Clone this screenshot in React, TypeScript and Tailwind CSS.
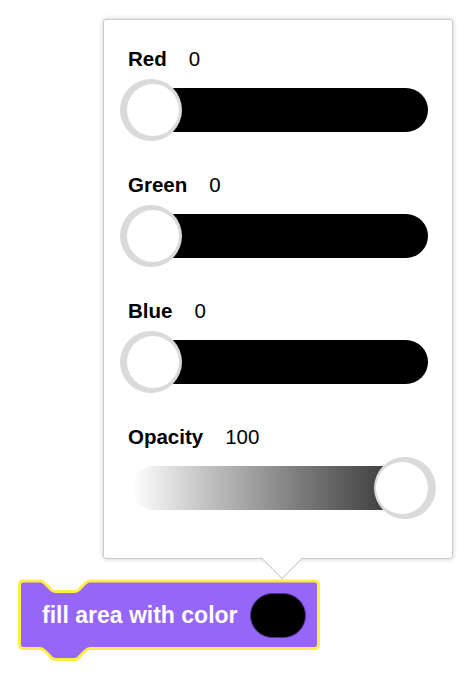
import React from "react";

/* color picker popover for a "fill area with color" block */

type Row = { label: string; value: number; kind: "solid" | "fade"; knob: number; inner: number };

const ROWS: Row[] = [
  { label: "Red", value: 0, kind: "solid", knob: -12, inner: 7 },
  { label: "Green", value: 0, kind: "solid", knob: -12, inner: 7 },
  { label: "Blue", value: 0, kind: "solid", knob: -12, inner: 7 },
  { label: "Opacity", value: 100, kind: "fade", knob: 242, inner: 2 },
];

function Slider({ row }: { row: Row }) {
  return (
    <div className="flex flex-col">
      <div className="flex items-baseline gap-[22px] text-[20.5px] leading-[24px] text-black">
        <span className="font-bold">{row.label}</span>
        <span>{row.value}</span>
      </div>
      <div
        className={
          row.kind === "solid"
            ? "relative mt-[17px] ml-[4px] h-[44px] w-[296px] rounded-full bg-black"
            : "relative mt-[17px] ml-[4px] h-[44px] w-[296px] rounded-full bg-gradient-to-r from-white to-[#262626]"
        }
      >
        {/* knob: grey ring with a white disc */}
        <div
          className="absolute top-1/2 h-[62px] w-[62px] -translate-y-1/2 rounded-full bg-[#dadada]"
          style={{ left: row.knob }}
        >
          <div
            className="absolute top-[5px] h-[52px] w-[52px] rounded-full bg-white"
            style={{ left: row.inner }}
          />
        </div>
      </div>
    </div>
  );
}

function Block() {
  const shape =
    "M 3.5 8 Q 3.5 4 7.5 4 H 24 C 26 4 27.5 5 29 6.5 L 33 10.5 C 34.5 12 36 14.5 39 14.5 H 59 C 62 14.5 63.5 12 65 10.5 L 69 6.5 C 70.5 5 72 4 74 4 H 298.5 Q 302.5 4 302.5 8 V 67.5 Q 302.5 71.5 298.5 71.5 H 74 C 72 71.5 70.5 72.5 69 74 L 65 78 C 63.5 79.5 62 82.5 59 82.5 H 39 C 36 82.5 34.5 79.5 33 78 L 29 74 C 27.5 72.5 26 71.5 24 71.5 H 7.5 Q 3.5 71.5 3.5 67.5 Z";
  return (
    <div className="relative ml-[16px] mt-[18px] h-[88px] w-[306px]">
      <svg className="absolute inset-0" width="306" height="88" viewBox="0 0 306 88">
        <path d={shape} fill="#9566f7" stroke="#fdec4a" strokeWidth="3" strokeLinejoin="round" />
      </svg>
      <div className="relative flex h-[75px] items-center gap-[12px] pt-[1px] pl-[26px]">
        <span className="text-[23px] font-bold leading-none text-white">fill area with color</span>
        <span className="h-[45px] w-[56px] rounded-full border border-[#4a3590] bg-black" />
      </div>
    </div>
  );
}

export default function App() {
  return (
    <div className="flex h-[674px] w-[468px] flex-col items-start overflow-hidden bg-white font-['Liberation_Sans',Arial,sans-serif]">
      <div className="relative ml-[103px] mt-[19px] flex h-[540px] w-[350px] flex-col gap-[41px] rounded-[3px] border border-[#cacaca] bg-white pt-[27px] pl-[24px] shadow-[0_0_5px_rgba(0,0,0,0.2)]">
        {ROWS.map((r) => (
          <Slider key={r.label} row={r} />
        ))}
        <div className="absolute bottom-[-15px] left-[163px] h-[30px] w-[30px] rotate-45 border-r border-b border-[#cacaca] bg-white" />
      </div>
      <Block />
    </div>
  );
}
